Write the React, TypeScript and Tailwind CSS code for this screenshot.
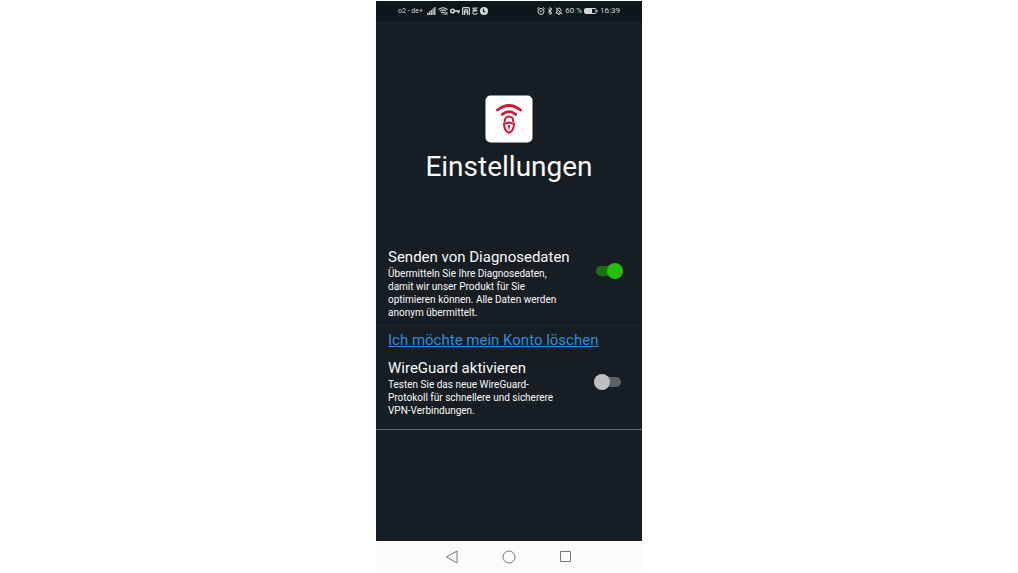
import { useState } from 'react'
import type { ReactNode } from 'react'

type SettingProps = {
  id: string
  title: string
  description: string
  checked: boolean
  onChange: (value: boolean) => void
}

function Setting({ id, title, description, checked, onChange }: SettingProps) {
  return (
    <div className="flex items-start justify-between pl-3 pr-[19px]">
      <div>
        <label htmlFor={id} className="block text-[15px] leading-5">{title}</label>
        <p id={`${id}-text`} className="w-[180px] text-[10px] leading-[13px]">{description}</p>
      </div>
      <input
        id={id}
        type="checkbox"
        role="switch"
        aria-describedby={`${id}-text`}
        checked={checked}
        onChange={(e) => onChange(e.target.checked)}
        className="mt-4 h-4 w-[29px] shrink-0 cursor-pointer appearance-none flex items-center before:h-[10px] before:w-[27px] before:shrink-0 before:rounded-full before:bg-[#5b6267] after:-ml-[27px] after:size-4 after:shrink-0 after:rounded-full after:bg-[#bfbfbf] checked:before:ml-[2px] checked:before:bg-[#1f6f1a] checked:after:-ml-4 checked:after:bg-[#25bd09]"
      />
    </div>
  )
}

function SignalIcon() {
  return (
    <svg className="h-2 w-[9px]" viewBox="0 0 9 8" fill="currentColor">
      <path d="M0 6h1.300v2H0zM1.800 4.500h1.300V8H1.800zM3.600 3h1.300v5H3.600zM5.400 1.500h1.300V8H5.400zM7.200 0h1.300v8H7.200z" />
    </svg>
  )
}

function WifiIcon() {
  return (
    <svg className="h-2 w-[10px]" viewBox="0 0 10 8" fill="none" stroke="currentColor" strokeWidth="1.100">
      <path d="M.4 2.700Q5-1.300 9.600 2.700M1.800 4.300Q5 1.600 8 4M3.300 5.800Q5 4.500 6 5.600" />
      <path d="M7 5v2.800M8.800 5v2.800M4.500 7.300h1" />
    </svg>
  )
}

function KeyIcon() {
  return (
    <svg className="h-2 w-[10px]" viewBox="0 0 10 8" fill="none" stroke="currentColor" strokeWidth="1.500">
      <circle cx="2.500" cy="4" r="1.800" />
      <path d="M4.200 4H10M8.300 4v2.300" />
    </svg>
  )
}

function ArchIcon() {
  return (
    <svg className="h-2 w-2" viewBox="0 0 8 8" fill="none" stroke="currentColor" strokeWidth="1.200">
      <path d="M.7 8V1.600Q.7.700 1.600.700h4.800q.9 0 .9.900V8M2.500 8V3.800q0-1.300 1.500-1.300t1.500 1.300V8" />
      <path d="M4 3.500v2.500" />
    </svg>
  )
}

function NewsIcon() {
  return (
    <svg className="h-2 w-[6px]" viewBox="0 0 6 8" fill="none" stroke="currentColor" strokeWidth="1.100">
      <path d="M.3 1.500C2 .3 3 2 5.700.8M5.300 3.200C3 2.700.8 2.700.8 3.900h4M.8 5c0 2.800 3 2.800 4.800 1.200" />
    </svg>
  )
}

function ClockIcon() {
  return (
    <svg className="size-2" viewBox="0 0 8 8">
      <circle cx="4" cy="4" r="4" fill="currentColor" />
      <path d="M3.500 1.800v3h2" fill="none" stroke="#0d161b" strokeWidth="1.100" />
    </svg>
  )
}

function AlarmIcon() {
  return (
    <svg className="h-2 w-2" viewBox="0 0 8 8" fill="none" stroke="currentColor">
      <circle cx="4" cy="4.400" r="3" />
      <path d="M.3 1.800 1.900.4M6.100.4l1.600 1.400M2.600 3.300 4 4.700l1.500-.9" />
    </svg>
  )
}

function BluetoothIcon() {
  return (
    <svg className="h-2 w-[6px]" viewBox="0 0 6 8" fill="none" stroke="currentColor">
      <path d="M.8 2.200 5 5.800 3 7.500v-7L5 2.200.8 5.800" />
    </svg>
  )
}

function MutedIcon() {
  return (
    <svg className="h-2 w-2" viewBox="0 0 8 8" fill="none" stroke="currentColor">
      <path d="M.7.8l6.600 6.400M2.600 1.500Q4 .5 5.300 1.600 6 2.400 6 4.500M1.900 2.600V5L1 6.200h4.800M3.200 7.500h1.500" />
    </svg>
  )
}

function BatteryIcon() {
  return (
    <svg className="h-2 w-[14px]" viewBox="0 0 14 8">
      <rect x=".5" y="1.500" width="11.500" height="5" rx="1" fill="none" stroke="currentColor" />
      <path d="M1 2h7v4H1zM12.500 3h1v2h-1z" fill="currentColor" />
    </svg>
  )
}

function AppLogo() {
  return (
    <svg className="size-12" viewBox="0 0 48 48" fill="none" stroke="#d5142b">
      <rect x=".5" y=".5" width="47" height="47" rx="5" fill="#fff" stroke="none" />
      <path d="M12.500 15Q24 6 35.500 15" strokeWidth="2.800" strokeLinecap="round" />
      <path d="M17.300 19.300Q24 14 30.700 19.300" strokeWidth="2.800" strokeLinecap="round" />
      <path d="M19.800 27v-1.300a4.200 4.200 0 0 1 8.400 0V27" strokeWidth="2" />
      <path d="M24 27.300c1.700.9 3.300 1.200 5 1.200 0 5-1.600 7.900-5 9.300-3.400-1.400-5-4.300-5-9.300 1.700 0 3.300-.3 5-1.200Z" strokeWidth="2" strokeLinejoin="round" />
      <circle cx="24" cy="31.300" r="1.200" fill="#d5142b" stroke="none" />
      <path d="M24 31.500v3" strokeWidth="1.200" />
    </svg>
  )
}

function NavButton({ label, children }: { label: string; children: ReactNode }) {
  return (
    <button type="button" aria-label={label} className="flex size-[14px] items-center justify-center">
      <svg className="size-[14px]" viewBox="0 0 14 14" fill="none" stroke="#777" strokeWidth="1">
        {children}
      </svg>
    </button>
  )
}

export default function App() {
  const [diagnostics, setDiagnostics] = useState(true)
  const [wireGuard, setWireGuard] = useState(false)

  return (
    <div className="flex min-h-screen justify-center bg-white py-px font-['Roboto',sans-serif]">
      <div className="flex w-full max-w-[266px] flex-col bg-[#171e23] text-[#f8f9f9]">
        {/* Statusleiste */}
        <header className="flex h-5 items-center justify-between bg-[#0d161b] px-[22px] text-[8px] leading-5 text-[#d2d6d8]">
          <div className="flex items-center gap-[2px]">
            <span className="mr-[2px] text-[7px]">o2 - de+</span>
            <SignalIcon />
            <WifiIcon />
            <KeyIcon />
            <ArchIcon />
            <NewsIcon />
            <ClockIcon />
          </div>
          <div className="flex items-center gap-[2px]">
            <AlarmIcon />
            <BluetoothIcon />
            <MutedIcon />
            <span>60 %</span>
            <BatteryIcon />
            <span>16:39</span>
          </div>
        </header>

        <main className="flex-1">
          <div className="flex flex-col items-center pt-[74px]">
            <AppLogo />
            <h1 className="mt-1 text-[28px] leading-10">Einstellungen</h1>
          </div>

          <section className="mt-[60px]">
            <Setting
              id="diagnostics"
              title="Senden von Diagnosedaten"
              description="Übermitteln Sie Ihre Diagnosedaten, damit wir unser Produkt für Sie optimieren können. Alle Daten werden anonym übermittelt."
              checked={diagnostics}
              onChange={setDiagnostics}
            />
            <div className="mt-[6px] border-t border-[#20272b] px-3 pt-1 text-[15px] leading-5">
              <a href="#" className="text-[#2f8bdc] underline">Ich möchte mein Konto löschen</a>
            </div>
            <div className="mt-2 border-b border-[#62696d] pb-3">
              <Setting
                id="wireguard"
                title="WireGuard aktivieren"
                description="Testen Sie das neue WireGuard-Protokoll für schnellere und sicherere VPN-Verbindungen."
                checked={wireGuard}
                onChange={setWireGuard}
              />
            </div>
          </section>
        </main>

        {/* Navigationsleiste */}
        <nav className="flex h-[31px] items-center justify-center gap-[43px] bg-[#fbfbfb]">
          <NavButton label="Zurück"><path d="M12 1v12L1.500 7Z" strokeLinejoin="round" /></NavButton>
          <NavButton label="Startseite"><circle cx="7" cy="7" r="6" /></NavButton>
          <NavButton label="Letzte Apps"><path d="M1.500 1.500h10v10h-10z" /></NavButton>
        </nav>
      </div>
    </div>
  )
}
